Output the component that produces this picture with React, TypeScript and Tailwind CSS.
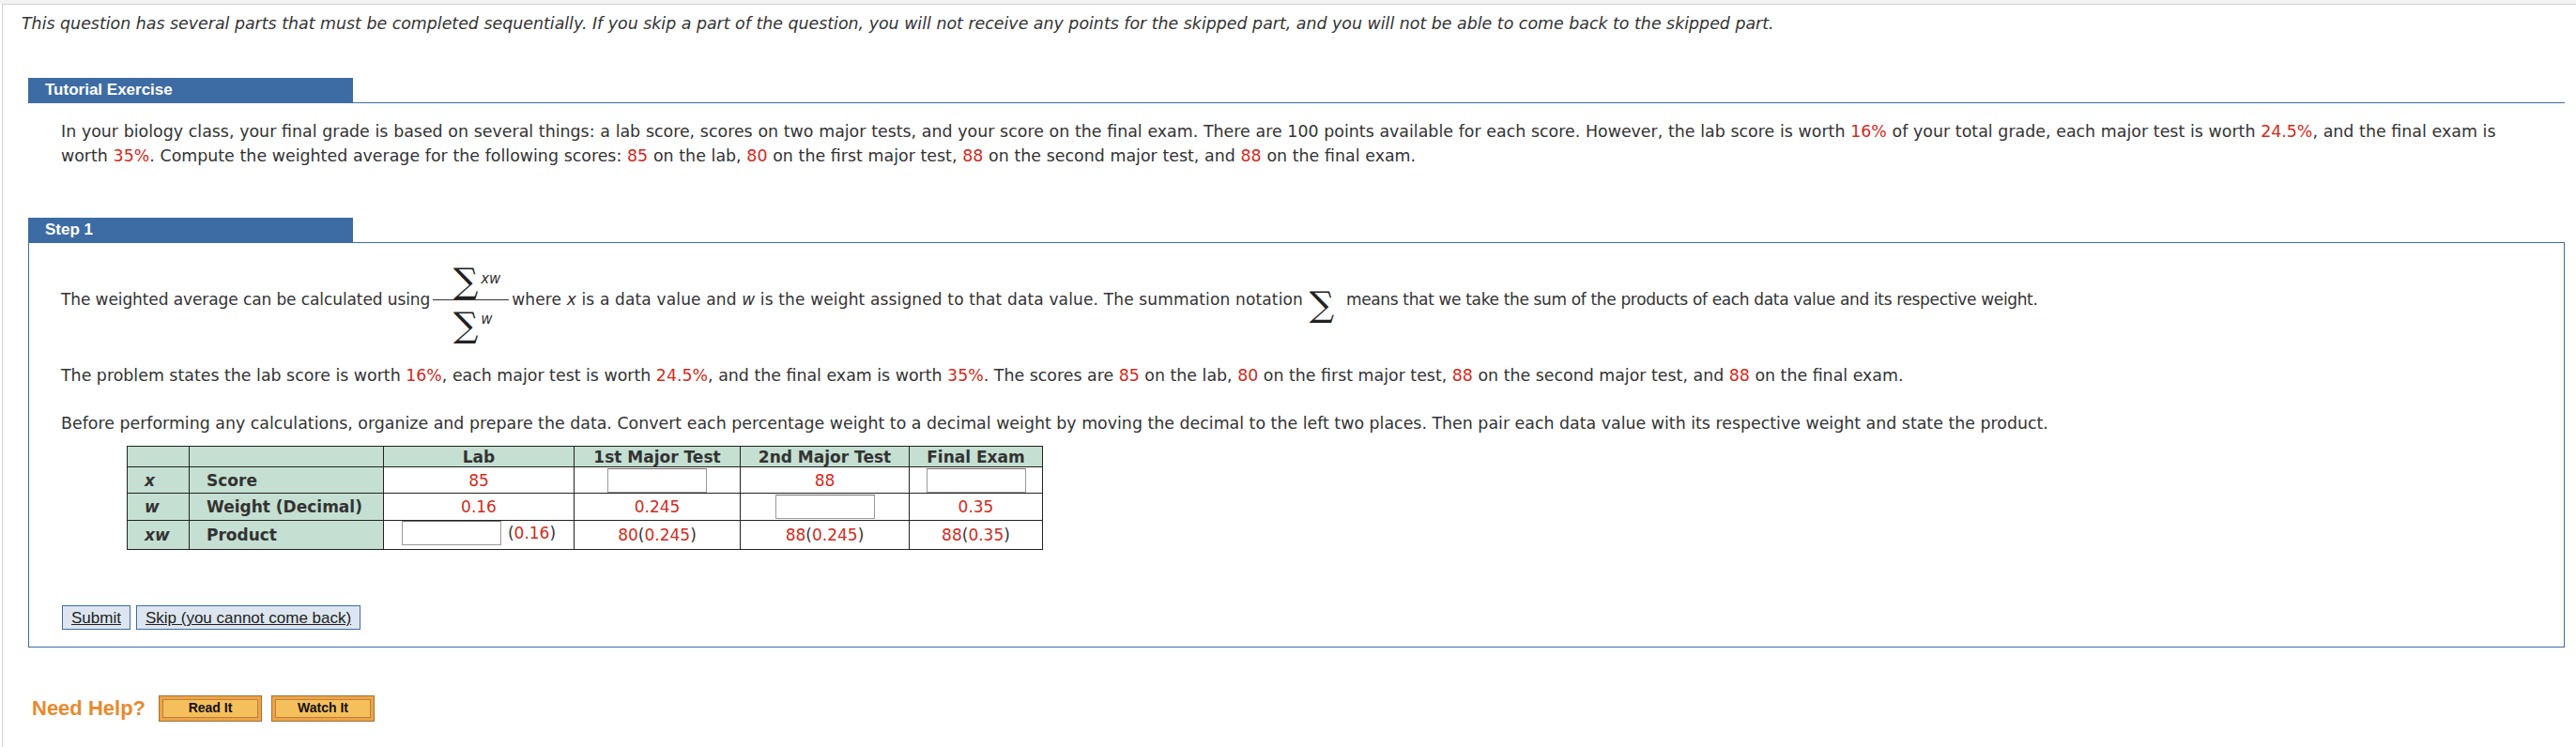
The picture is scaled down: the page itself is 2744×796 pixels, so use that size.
import React from "react"

const Red = ({ children }: { children: React.ReactNode }) => (
  <span className="text-[#d42a20]">{children}</span>
)

function Field() {
  return <span className="inline-block w-[106px] h-[26px] border border-[#9a9a9a] border-t-[#6f6f6f] bg-white align-middle" />
}

function Header({ title }: { title: string }) {
  return (
    <div className="w-[346px] h-[26px] bg-[#3d6ca4] pl-[18px] font-['Liberation_Sans',Arial,sans-serif] text-[17px] font-bold leading-[26px] text-white">
      {title}
    </div>
  )
}

function Sigma({ className = "" }: { className?: string }) {
  return (
    <span className={`flex h-[25px] w-[28px] items-center justify-center overflow-visible text-[37px] leading-none text-[#222] font-['DejaVu_Serif',serif] ${className}`}>
      ∑
    </span>
  )
}

function HelpButton({ label }: { label: string }) {
  return (
    <div className="w-[110px] h-[28px] border border-[#a0703a] bg-[#eea446] p-[3px]">
      <div className="h-full border border-[#b98040] bg-[#f5bf5c] flex items-center justify-center font-['Liberation_Sans',Arial,sans-serif] text-[14px] font-bold text-[#111]">
        {label}
      </div>
    </div>
  )
}

export default function App() {
  const th = "border border-[#222] bg-[#c5dfd2] font-bold text-center p-0"
  const lab = "border border-[#222] bg-[#c5dfd2] font-bold text-left pl-[18px] p-0"
  const td = "border border-[#222] bg-white text-center p-0"

  return (
    <div className="min-h-[796px] bg-white font-['DejaVu_Sans',Verdana,sans-serif] text-[17.4px] text-[#333]">
      <div className="h-[4px] bg-[#f3f3f3]" />
      <div className="ml-[2px] border-l border-t border-[#d2d2d2] pb-[28px]">
        <p className="pl-[20px] pt-[7px] italic leading-[26px]">
          This question has several parts that must be completed sequentially. If you skip a part of the question, you will not receive any points for the skipped part, and you will not be able to come back to the skipped part.
        </p>

        {/* Tutorial */}
        <section className="ml-[27px] mr-[12px] mt-[45px]">
          <div className="border-b border-[#3d6ca4]">
            <Header title="Tutorial Exercise" />
          </div>
          <p className="px-[35px] pt-[17px] leading-[26px] [word-spacing:0.2px]">
            In your biology class, your final grade is based on several things: a lab score, scores on two major tests, and your score on the final exam. There are 100 points available for each score. However, the lab score is worth <Red>16%</Red> of your total grade, each major test is worth <Red>24.5%</Red>, and the final exam is worth <Red>35%</Red>. Compute the weighted average for the following scores: <Red>85</Red> on the lab, <Red>80</Red> on the first major test, <Red>88</Red> on the second major test, and <Red>88</Red> on the final exam.
          </p>
        </section>

        {/* Step 1 */}
        <section className="ml-[27px] mr-[12px] mt-[53px]">
          <Header title="Step 1" />
          <div className="border border-[#3d6ca4] pl-[34px] pr-[20px] pt-[20px] pb-[18px]">
            <div className="flex items-center whitespace-nowrap text-[17px]">
              <span className="tracking-[-0.1px]">The weighted average can be calculated using</span>
              <span className="ml-[3px] flex w-[81px] flex-col">
                <span className="flex h-[40px] items-start pt-[8px] pl-[21px]">
                  <Sigma />
                  <span className="mt-[3px] ml-[2px] text-[15px] italic leading-[15px]">xw</span>
                </span>
                <span className="border-t border-[#333]" />
                <span className="flex h-[40px] items-start pt-[14px] pl-[21px]">
                  <Sigma />
                  <span className="ml-[2px] mt-[-1px] text-[15px] italic leading-[15px]">w</span>
                </span>
              </span>
              <span className="ml-[3px] tracking-[0.15px]">
                where <i>x</i> is a data value and <i>w</i> is the weight assigned to that data value. The summation notation
              </span>
              <Sigma className="ml-[6px] mt-[10px]" />
              <span className="ml-[12px] tracking-[-0.35px]">means that we take the sum of the products of each data value and its respective weight.</span>
            </div>

            <p className="mt-[27px] leading-[26px]">
              The problem states the lab score is worth <Red>16%</Red>, each major test is worth <Red>24.5%</Red>, and the final exam is worth <Red>35%</Red>. The scores are <Red>85</Red> on the lab, <Red>80</Red> on the first major test, <Red>88</Red> on the second major test, and <Red>88</Red> on the final exam.
            </p>
            <p className="mt-[25px] leading-[26px]">
              Before performing any calculations, organize and prepare the data. Convert each percentage weight to a decimal weight by moving the decimal to the left two places. Then pair each data value with its respective weight and state the product.
            </p>

            <table className="ml-[70px] mt-[11px] border-collapse text-[17px] leading-[20px]">
              <colgroup>
                <col className="w-[66px]" />
                <col className="w-[207px]" />
                <col className="w-[203px]" />
                <col className="w-[177px]" />
                <col className="w-[180px]" />
                <col className="w-[142px]" />
              </colgroup>
              <tbody>
                <tr className="h-[22px]">
                  <td className={th} />
                  <td className={th} />
                  <td className={th}>Lab</td>
                  <td className={th}>1st Major Test</td>
                  <td className={th}>2nd Major Test</td>
                  <td className={th}>Final Exam</td>
                </tr>
                <tr className="h-[28px]">
                  <td className={`${lab} italic`}>x</td>
                  <td className={lab}>Score</td>
                  <td className={td}><Red>85</Red></td>
                  <td className={td}><Field /></td>
                  <td className={td}><Red>88</Red></td>
                  <td className={td}><Field /></td>
                </tr>
                <tr className="h-[29px]">
                  <td className={`${lab} italic`}>w</td>
                  <td className={lab}>Weight (Decimal)</td>
                  <td className={td}><Red>0.16</Red></td>
                  <td className={td}><Red>0.245</Red></td>
                  <td className={td}><Field /></td>
                  <td className={td}><Red>0.35</Red></td>
                </tr>
                <tr className="h-[29px]">
                  <td className={`${lab} italic`}>xw</td>
                  <td className={lab}>Product</td>
                  <td className={td}>
                    <span className="inline-flex items-center gap-[7px]">
                      <Field />
                      <span>(<Red>0.16</Red>)</span>
                    </span>
                  </td>
                  <td className={td}><Red>80</Red>(<Red>0.245</Red>)</td>
                  <td className={td}><Red>88</Red>(<Red>0.245</Red>)</td>
                  <td className={td}><Red>88</Red>(<Red>0.35</Red>)</td>
                </tr>
              </tbody>
            </table>

            <div className="mt-[59px] ml-[1px] flex gap-[6px] font-['Liberation_Sans',Arial,sans-serif] text-[17px] text-[#222]">
              <button className="h-[26px] border border-[#3d6ca4] bg-[#dde6f0] px-[9px] underline">Submit</button>
              <button className="h-[26px] border border-[#3d6ca4] bg-[#dde6f0] px-[9px] underline">Skip (you cannot come back)</button>
            </div>
          </div>
        </section>

        {/* Need help */}
        <div className="ml-[31px] mt-[48px] flex items-center gap-[10px] font-['Liberation_Sans',Arial,sans-serif]">
          <span className="mr-[4px] text-[22px] font-bold text-[#e8892e]">Need Help?</span>
          <HelpButton label="Read It" />
          <HelpButton label="Watch It" />
        </div>
      </div>
    </div>
  )
}
